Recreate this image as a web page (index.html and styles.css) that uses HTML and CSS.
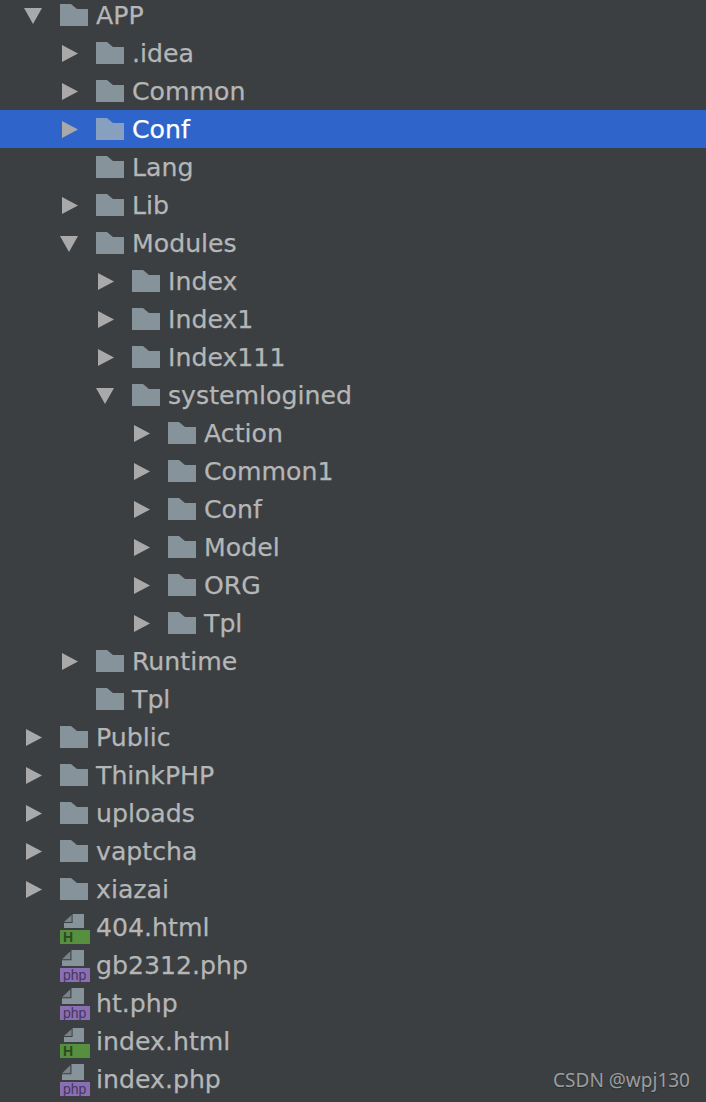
FILE: index.html
```html
<!DOCTYPE html>
<html lang="en">
<head>
    <meta charset="utf-8"/>
    <title>Project tree</title>
    <link rel="stylesheet" href="styles.css">
</head>
<body>
<svg class="defs" width="0" height="0">
    <symbol id="arrow-right" viewBox="0 0 16 17"><path d="M0 0 16 8.5 0 17z"/></symbol>
    <symbol id="arrow-down" viewBox="0 0 18 16"><path d="M0 0H18L9 16z"/></symbol>
    <symbol id="folder" viewBox="0 0 28 22"><path d="M0 0H11L17 5H28V22H0z"/></symbol>
    <symbol id="paper" viewBox="0 0 20 14" preserveAspectRatio="none"><path d="M8.6 0H20V14H0V9H8.6z"/><path d="M7.6 1V8H0z" opacity=".8"/></symbol>
</svg>

<ul class="tree">
    <li class="row depth-0"><svg class="arrow down"><use href="#arrow-down"/></svg><svg class="folder"><use href="#folder"/></svg><span>APP</span></li>
    <li class="row depth-1"><svg class="arrow"><use href="#arrow-right"/></svg><svg class="folder"><use href="#folder"/></svg><span>.idea</span></li>
    <li class="row depth-1"><svg class="arrow"><use href="#arrow-right"/></svg><svg class="folder"><use href="#folder"/></svg><span>Common</span></li>
    <li class="row depth-1 selected"><svg class="arrow"><use href="#arrow-right"/></svg><svg class="folder"><use href="#folder"/></svg><span>Conf</span></li>
    <li class="row depth-1 leaf"><svg class="folder"><use href="#folder"/></svg><span>Lang</span></li>
    <li class="row depth-1"><svg class="arrow"><use href="#arrow-right"/></svg><svg class="folder"><use href="#folder"/></svg><span>Lib</span></li>
    <li class="row depth-1"><svg class="arrow down"><use href="#arrow-down"/></svg><svg class="folder"><use href="#folder"/></svg><span>Modules</span></li>
    <li class="row depth-2"><svg class="arrow"><use href="#arrow-right"/></svg><svg class="folder"><use href="#folder"/></svg><span>Index</span></li>
    <li class="row depth-2"><svg class="arrow"><use href="#arrow-right"/></svg><svg class="folder"><use href="#folder"/></svg><span>Index1</span></li>
    <li class="row depth-2"><svg class="arrow"><use href="#arrow-right"/></svg><svg class="folder"><use href="#folder"/></svg><span>Index111</span></li>
    <li class="row depth-2"><svg class="arrow down"><use href="#arrow-down"/></svg><svg class="folder"><use href="#folder"/></svg><span>systemlogined</span></li>
    <li class="row depth-3"><svg class="arrow"><use href="#arrow-right"/></svg><svg class="folder"><use href="#folder"/></svg><span>Action</span></li>
    <li class="row depth-3"><svg class="arrow"><use href="#arrow-right"/></svg><svg class="folder"><use href="#folder"/></svg><span>Common1</span></li>
    <li class="row depth-3"><svg class="arrow"><use href="#arrow-right"/></svg><svg class="folder"><use href="#folder"/></svg><span>Conf</span></li>
    <li class="row depth-3"><svg class="arrow"><use href="#arrow-right"/></svg><svg class="folder"><use href="#folder"/></svg><span>Model</span></li>
    <li class="row depth-3"><svg class="arrow"><use href="#arrow-right"/></svg><svg class="folder"><use href="#folder"/></svg><span>ORG</span></li>
    <li class="row depth-3"><svg class="arrow"><use href="#arrow-right"/></svg><svg class="folder"><use href="#folder"/></svg><span>Tpl</span></li>
    <li class="row depth-1"><svg class="arrow"><use href="#arrow-right"/></svg><svg class="folder"><use href="#folder"/></svg><span>Runtime</span></li>
    <li class="row depth-1 leaf"><svg class="folder"><use href="#folder"/></svg><span>Tpl</span></li>
    <li class="row depth-0"><svg class="arrow"><use href="#arrow-right"/></svg><svg class="folder"><use href="#folder"/></svg><span>Public</span></li>
    <li class="row depth-0"><svg class="arrow"><use href="#arrow-right"/></svg><svg class="folder"><use href="#folder"/></svg><span>ThinkPHP</span></li>
    <li class="row depth-0"><svg class="arrow"><use href="#arrow-right"/></svg><svg class="folder"><use href="#folder"/></svg><span>uploads</span></li>
    <li class="row depth-0"><svg class="arrow"><use href="#arrow-right"/></svg><svg class="folder"><use href="#folder"/></svg><span>vaptcha</span></li>
    <li class="row depth-0"><svg class="arrow"><use href="#arrow-right"/></svg><svg class="folder"><use href="#folder"/></svg><span>xiazai</span></li>
    <li class="row depth-0 leaf"><div class="file file-html"><svg class="paper"><use href="#paper"/></svg><b class="badge">H</b></div><span>404.html</span></li>
    <li class="row depth-0 leaf"><div class="file file-php"><svg class="paper"><use href="#paper"/></svg><b class="badge">php</b></div><span>gb2312.php</span></li>
    <li class="row depth-0 leaf"><div class="file file-php"><svg class="paper"><use href="#paper"/></svg><b class="badge">php</b></div><span>ht.php</span></li>
    <li class="row depth-0 leaf"><div class="file file-html"><svg class="paper"><use href="#paper"/></svg><b class="badge">H</b></div><span>index.html</span></li>
    <li class="row depth-0 leaf"><div class="file file-php"><svg class="paper"><use href="#paper"/></svg><b class="badge">php</b></div><span>index.php</span></li>
</ul>

<div class="watermark">CSDN @wpj130</div>
</body>
</html>
```

FILE: styles.css
```css
html, body {
    margin: 0;
    height: 1102px;
    overflow: hidden;
    background: #3c3f41;
}

body {
    position: relative;
    font-family: "DejaVu Sans", sans-serif;
}

.defs {
    display: block;
    height: 0;
}

.tree {
    list-style: none;
    margin: -4px 0 0;
    padding: 0;
}

.row {
    display: flex;
    align-items: center;
    height: 38px;
    font-size: 25.2px;
    color: #b4b6b7;
    -webkit-text-stroke: 0.25px currentColor;
    white-space: nowrap;
}

.depth-0 { padding-left: 24px; }
.depth-1 { padding-left: 60px; }
.depth-2 { padding-left: 96px; }
.depth-3 { padding-left: 132px; }

.depth-0.leaf { padding-left: 60px; }
.depth-1.leaf { padding-left: 96px; }

.selected {
    background: #2f65ca;
    color: #fff;
}

.arrow {
    width: 16px;
    height: 17px;
    margin: 1px 18px 0 2px;
    fill: #a9a9a9;
}

.arrow.down {
    width: 18px;
    height: 16px;
    margin: 2px 18px 0 0;
}

.folder {
    width: 28px;
    height: 22px;
    margin-right: 8px;
    fill: #87939a;
}

.selected .folder {
    fill: #87a0c0;
}

.file {
    display: flex;
    flex-direction: column;
    justify-content: flex-end;
    align-items: flex-end;
    width: 30px;
    height: 32px;
    margin: 2px 6px 0 0;
    -webkit-text-stroke: 0;
}

.paper {
    margin: 0 6px 2px 0;
    fill: #87939a;
}

.file-html .paper {
    width: 20px;
    height: 14px;
}

.file-php .paper {
    width: 22px;
    height: 16px;
}

.badge {
    align-self: stretch;
    height: 14px;
    padding-left: 3px;
    font: 14px/14px "Liberation Sans", sans-serif;
}

.file-html .badge {
    background: #568f3d;
    color: #2c4a22;
    font-weight: bold;
}

.file-php .badge {
    background: #8a6fb2;
    color: #45375f;
}

.watermark {
    position: absolute;
    right: 16px;
    top: 1068px;
    font: 19px/24px "Noto Sans", sans-serif;
    color: #9b9d9e;
    text-shadow: 0 1px 1px #2a2c2d;
}
```
